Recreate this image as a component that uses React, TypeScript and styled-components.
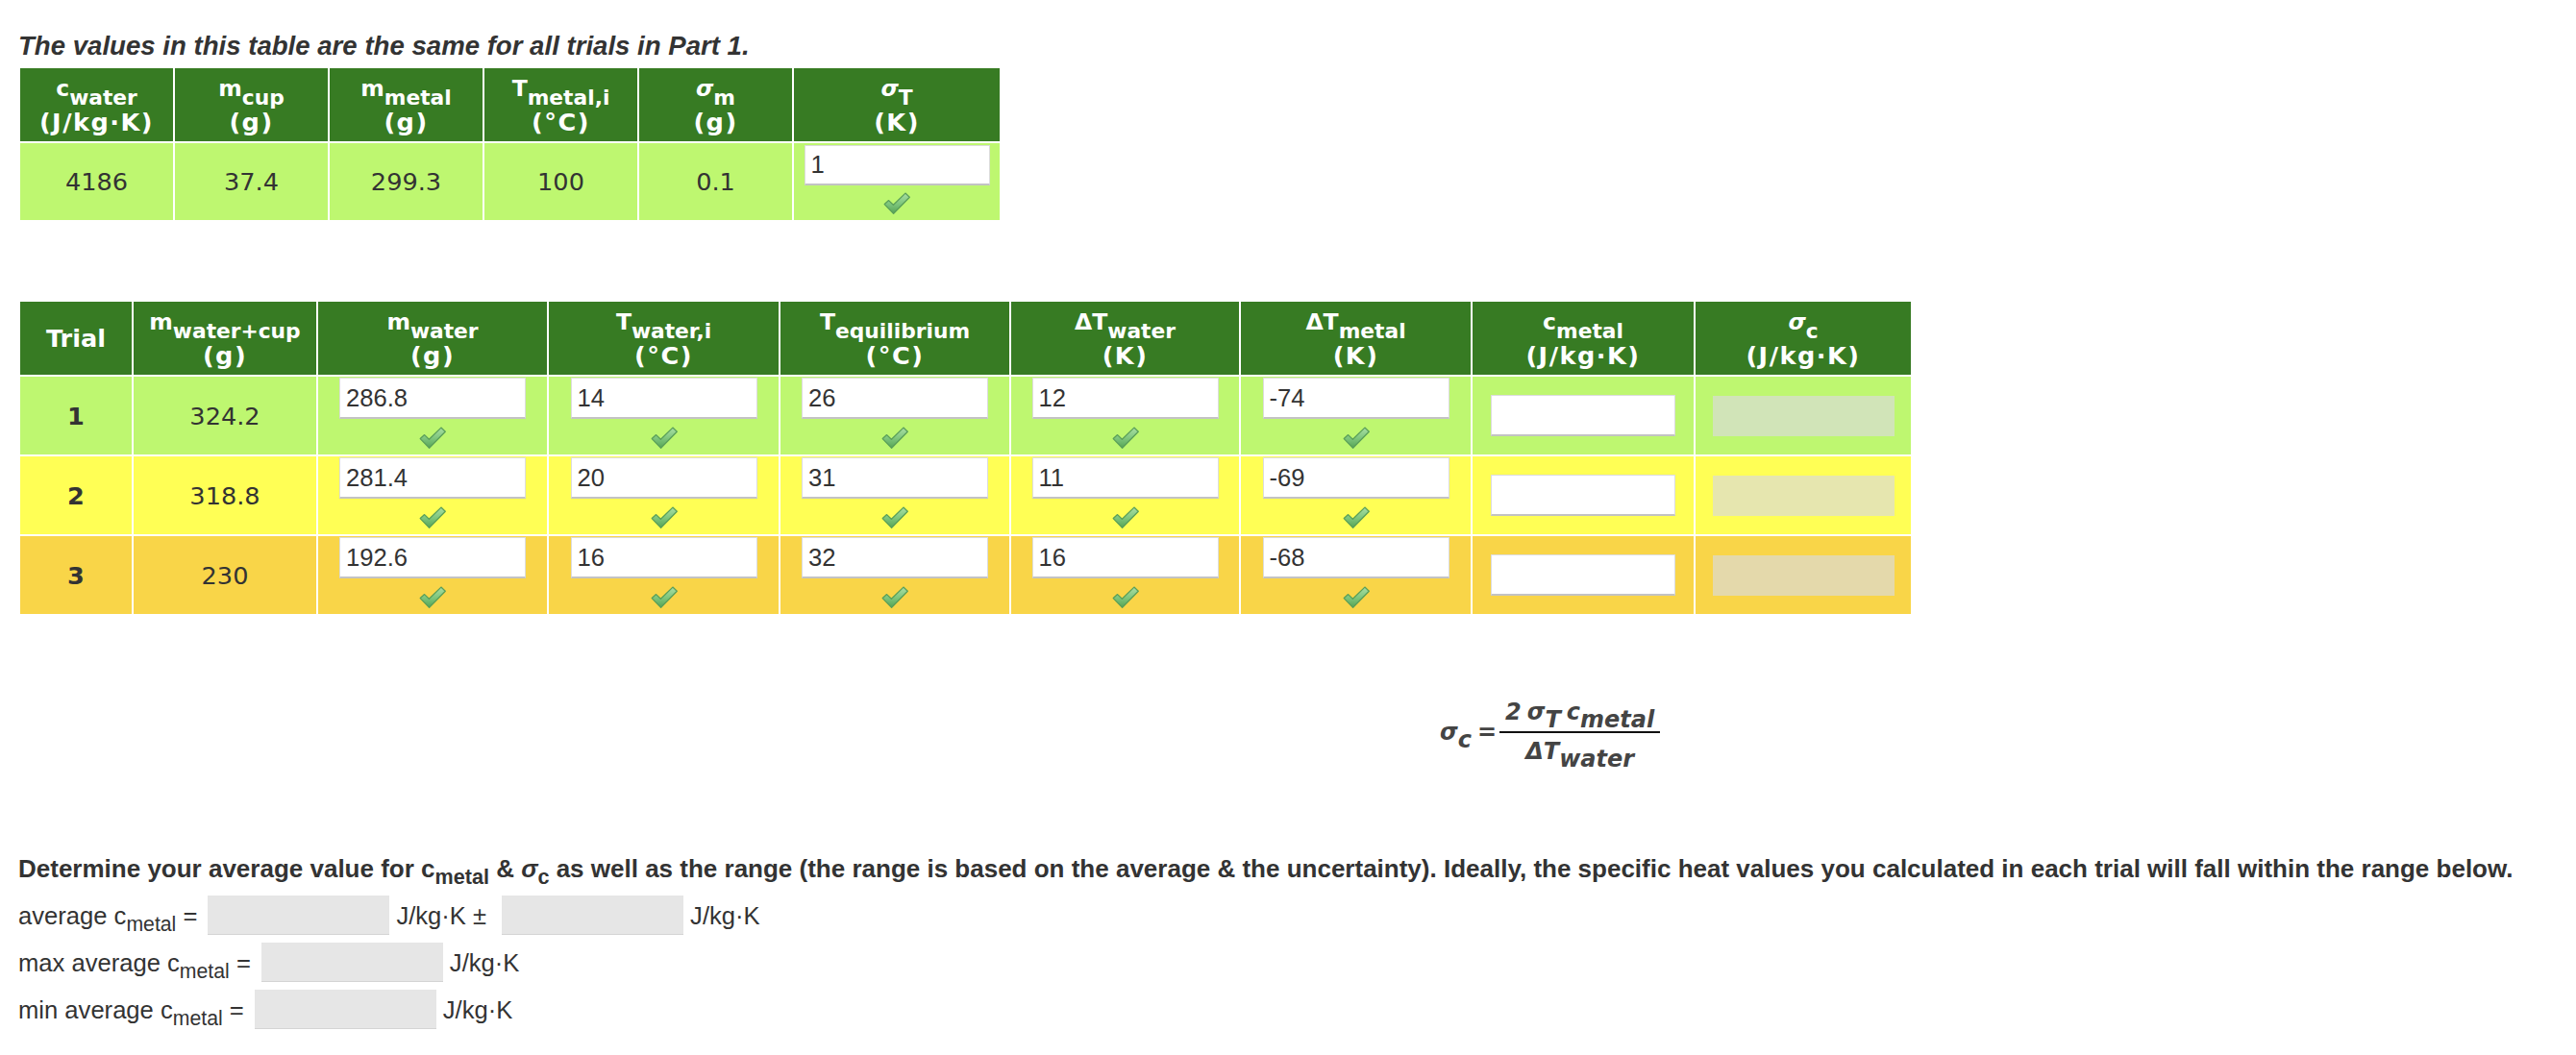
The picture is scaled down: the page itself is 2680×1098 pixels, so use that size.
import React, { useId } from "react";
import styled, { createGlobalStyle } from "styled-components";

type Tone = "green" | "yellow" | "gold";

const toneBg: Record<Tone, string> = {
  green: "#bef770",
  yellow: "#ffff55",
  gold: "#f9d548",
};

const GlobalStyle = createGlobalStyle`
  html, body { margin: 0; padding: 0; background: #ffffff; }
  body { font-family: "Liberation Sans", Arial, sans-serif; color: #333333; }
  * { box-sizing: border-box; }
`;

const Page = styled.main`
  padding: 32px 0 0 19px;
  min-height: 1098px;
`;

const Caption = styled.p`
  margin: 0;
  font: italic bold 27.6px/31px "Liberation Sans", Arial, sans-serif;
  color: #333333;
  white-space: nowrap;
`;

const DataTable = styled.table<{ $gap: number; $width: number }>`
  width: ${(p) => p.$width}px;
  margin-top: ${(p) => p.$gap}px;
  border-collapse: separate;
  border-spacing: 2px;
  table-layout: fixed;
  font-family: "DejaVu Sans", Verdana, sans-serif;
  font-size: 25.6px;
  color: #333333;
`;

const Col = styled.col<{ $w: number }>`
  width: ${(p) => p.$w}px;
`;

const HeadCell = styled.th`
  height: 76px;
  padding: 0;
  background: #377b23;
  color: #ffffff;
  font-weight: bold;
  line-height: 36px;
  text-align: center;
  vertical-align: middle;
  white-space: nowrap;
`;

const Sym = styled.span<{ $italic?: boolean; $size: number }>`
  font-size: ${(p) => p.$size}em;
  line-height: 1;
  font-style: ${(p) => (p.$italic ? "italic" : "normal")};
`;

const Sub = styled.sub<{ $size: number; $drop: number }>`
  font-size: ${(p) => p.$size}em;
  vertical-align: ${(p) => -p.$drop}px;
  line-height: 0;
`;

const UnitLine = styled.span`
  letter-spacing: 1.5px;
`;

const ValueCell = styled.td<{ $tone: Tone; $h: number; $bold?: boolean }>`
  height: ${(p) => p.$h}px;
  padding: 0;
  background: ${(p) => toneBg[p.$tone]};
  text-align: center;
  vertical-align: middle;
  font-weight: ${(p) => (p.$bold ? "bold" : "normal")};
`;

const EntryCell = styled.td<{ $tone: Tone; $h: number; $pad: number }>`
  height: ${(p) => p.$h}px;
  padding: ${(p) => p.$pad}px 0 0;
  background: ${(p) => toneBg[p.$tone]};
  vertical-align: top;
`;

const EntryStack = styled.div<{ $gap: number }>`
  display: flex;
  flex-direction: column;
  align-items: center;
  gap: ${(p) => p.$gap}px;
`;

const Field = styled.input<{ $w: number; $h: number }>`
  display: block;
  width: ${(p) => p.$w}px;
  height: ${(p) => p.$h}px;
  margin: 0;
  padding: 0 6px;
  background: #ffffff;
  border: 1px solid #dcdcdc;
  border-bottom: 2px solid #c3c3c3;
  border-radius: 0;
  font: 25.6px "Liberation Sans", Arial, sans-serif;
  color: #333333;
  outline: none;
`;

const CenterCell = styled.td<{ $tone: Tone; $h: number }>`
  height: ${(p) => p.$h}px;
  padding: 0;
  background: ${(p) => toneBg[p.$tone]};
  vertical-align: middle;
`;

const CenterBox = styled.div`
  display: flex;
  justify-content: center;
  align-items: center;
`;

const LockedField = styled.input`
  display: block;
  width: 189px;
  height: 42px;
  margin: 0;
  padding: 0 6px;
  border: none;
  border-radius: 0;
  background: rgba(218, 218, 218, 0.68);
  font: 25.6px "Liberation Sans", Arial, sans-serif;
  outline: none;
`;

const CheckMark: React.FC = () => {
  const id = useId();
  return (
    <svg width="30" height="25" viewBox="0 0 30 25" aria-hidden="true">
      <defs>
        <linearGradient id={id} x1="0" y1="0" x2="0" y2="1">
          <stop offset="0" stopColor="#a9dfa4" />
          <stop offset="0.55" stopColor="#7cc47a" />
          <stop offset="1" stopColor="#56a456" />
        </linearGradient>
      </defs>
      <path
        d="M2.2 13.6 L6.6 9.6 L11.4 14.2 L23.9 2.1 L28.3 6.2 L11.6 23.2 Z"
        fill={`url(#${id})`}
        stroke="#5a9f59"
        strokeWidth="1.3"
        strokeLinejoin="round"
      />
    </svg>
  );
};

const FormulaRow = styled.div`
  display: flex;
  align-items: center;
  height: 71px;
  margin: 85px 0 0 1479px;
  font: italic bold 24px/30px "DejaVu Sans", Verdana, sans-serif;
  color: #444444;
`;

const Lhs = styled.span`
  white-space: nowrap;
`;

const Equals = styled.span`
  margin: 0 3px 0 6px;
  font-style: normal;
`;

const Fraction = styled.span`
  display: inline-flex;
  flex-direction: column;
  align-items: center;
`;

const Numerator = styled.span`
  padding: 0 6px 5px;
  white-space: nowrap;
`;

const Gap = styled.span`
  display: inline-block;
  width: 6px;
`;

const Bar = styled.span`
  align-self: stretch;
  height: 2px;
  background: #111111;
`;

const Denominator = styled.span`
  padding-top: 4px;
  white-space: nowrap;
`;

const Prompt = styled.p`
  margin: 92px 0 0;
  font: bold 26px/30px "Liberation Sans", Arial, sans-serif;
  color: #333333;
  white-space: nowrap;
`;

const AnswerRow = styled.div<{ $first?: boolean }>`
  display: flex;
  align-items: center;
  height: 49px;
  margin-top: ${(p) => (p.$first ? 9 : 0)}px;
  font: 25.6px/30px "Liberation Sans", Arial, sans-serif;
  color: #333333;
  white-space: nowrap;
`;

const AnswerField = styled.input<{ $lead: number }>`
  display: block;
  width: 189px;
  height: 41px;
  margin: 0 0 0 ${(p) => p.$lead}px;
  padding: 0 6px;
  background: #e6e6e6;
  border: none;
  border-bottom: 1px solid #d4d4d4;
  border-radius: 0;
  font: 25.6px "Liberation Sans", Arial, sans-serif;
  outline: none;
`;

const UnitText = styled.span`
  margin-left: 7px;
`;

type Head = { sym: string; sub: string; unit: string; italic?: boolean };

const HeadLabel: React.FC<Head> = ({ sym, sub, unit, italic }) => (
  <>
    <Sym $italic={italic} $size={0.92}>
      {sym}
    </Sym>
    <Sub $size={0.85} $drop={9}>
      {sub}
    </Sub>
    <br />
    <UnitLine>{unit}</UnitLine>
  </>
);

const constantHeads: Head[] = [
  { sym: "c", sub: "water", unit: "(J/kg·K)" },
  { sym: "m", sub: "cup", unit: "(g)" },
  { sym: "m", sub: "metal", unit: "(g)" },
  { sym: "T", sub: "metal,i", unit: "(°C)" },
  { sym: "σ", sub: "m", unit: "(g)", italic: true },
  { sym: "σ", sub: "T", unit: "(K)", italic: true },
];

const constantValues = ["4186", "37.4", "299.3", "100", "0.1"];

const trialHeads: Head[] = [
  { sym: "m", sub: "water+cup", unit: "(g)" },
  { sym: "m", sub: "water", unit: "(g)" },
  { sym: "T", sub: "water,i", unit: "(°C)" },
  { sym: "T", sub: "equilibrium", unit: "(°C)" },
  { sym: "ΔT", sub: "water", unit: "(K)" },
  { sym: "ΔT", sub: "metal", unit: "(K)" },
  { sym: "c", sub: "metal", unit: "(J/kg·K)" },
  { sym: "σ", sub: "c", unit: "(J/kg·K)", italic: true },
];

type Trial = { n: number; total: string; entries: string[]; tone: Tone };

const trials: Trial[] = [
  { n: 1, total: "324.2", entries: ["286.8", "14", "26", "12", "-74"], tone: "green" },
  { n: 2, total: "318.8", entries: ["281.4", "20", "31", "11", "-69"], tone: "yellow" },
  { n: 3, total: "230", entries: ["192.6", "16", "32", "16", "-68"], tone: "gold" },
];

const constantCols = [159, 159, 159, 159, 159, 214];
const trialCols = [116, 190, 238, 239, 238, 237, 239, 230, 224];

const tableWidth = (cols: number[]) => cols.reduce((a, b) => a + b, 0) + (cols.length + 1) * 2;

const Metal: React.FC = () => (
  <>
    c
    <Sub $size={0.83} $drop={7}>
      metal
    </Sub>
  </>
);

export default function App() {
  return (
    <>
      <GlobalStyle />
      <Page>
        <Caption>The values in this table are the same for all trials in Part 1.</Caption>

        <DataTable $gap={6} $width={tableWidth(constantCols)}>
          <colgroup>
            {constantCols.map((w, i) => (
              <Col key={i} $w={w} />
            ))}
          </colgroup>
          <thead>
            <tr>
              {constantHeads.map((h, i) => (
                <HeadCell key={i}>
                  <HeadLabel {...h} />
                </HeadCell>
              ))}
            </tr>
          </thead>
          <tbody>
            <tr>
              {constantValues.map((v, i) => (
                <ValueCell key={i} $tone="green" $h={80}>
                  {v}
                </ValueCell>
              ))}
              <EntryCell $tone="green" $h={80} $pad={2}>
                <EntryStack $gap={6}>
                  <Field $w={193} $h={42} defaultValue="1" />
                  <CheckMark />
                </EntryStack>
              </EntryCell>
            </tr>
          </tbody>
        </DataTable>

        <DataTable $gap={81} $width={tableWidth(trialCols)}>
          <colgroup>
            {trialCols.map((w, i) => (
              <Col key={i} $w={w} />
            ))}
          </colgroup>
          <thead>
            <tr>
              <HeadCell>Trial</HeadCell>
              {trialHeads.map((h, i) => (
                <HeadCell key={i}>
                  <HeadLabel {...h} />
                </HeadCell>
              ))}
            </tr>
          </thead>
          <tbody>
            {trials.map((t) => (
              <tr key={t.n}>
                <ValueCell $tone={t.tone} $h={81} $bold>
                  {t.n}
                </ValueCell>
                <ValueCell $tone={t.tone} $h={81}>
                  {t.total}
                </ValueCell>
                {t.entries.map((e, i) => (
                  <EntryCell key={i} $tone={t.tone} $h={81} $pad={1}>
                    <EntryStack $gap={7}>
                      <Field $w={194} $h={43} defaultValue={e} />
                      <CheckMark />
                    </EntryStack>
                  </EntryCell>
                ))}
                <CenterCell $tone={t.tone} $h={81}>
                  <CenterBox>
                    <Field $w={192} $h={43} defaultValue="" />
                  </CenterBox>
                </CenterCell>
                <CenterCell $tone={t.tone} $h={81}>
                  <CenterBox>
                    <LockedField disabled defaultValue="" />
                  </CenterBox>
                </CenterCell>
              </tr>
            ))}
          </tbody>
        </DataTable>

        <FormulaRow>
          <Lhs>
            σ
            <Sub $size={1} $drop={8}>
              c
            </Sub>
            <Equals>=</Equals>
          </Lhs>
          <Fraction>
            <Numerator>
              2<Gap />σ
              <Sub $size={1} $drop={8}>
                T
              </Sub>
              <Gap />c
              <Sub $size={1} $drop={8}>
                metal
              </Sub>
            </Numerator>
            <Bar />
            <Denominator>
              ΔT
              <Sub $size={1} $drop={8}>
                water
              </Sub>
            </Denominator>
          </Fraction>
        </FormulaRow>

        <Prompt>
          Determine your average value for <Metal /> &amp; <i>σ</i>
          <Sub $size={0.83} $drop={7}>
            c
          </Sub>{" "}
          as well as the range (the range is based on the average &amp; the uncertainty). Ideally, the
          specific heat values you calculated in each trial will fall within the range below.
        </Prompt>

        <AnswerRow $first>
          <span>
            average <Metal /> =
          </span>
          <AnswerField $lead={11} disabled />
          <UnitText>J/kg·K ±</UnitText>
          <AnswerField $lead={16} disabled />
          <UnitText>J/kg·K</UnitText>
        </AnswerRow>
        <AnswerRow>
          <span>
            max average <Metal /> =
          </span>
          <AnswerField $lead={11} disabled />
          <UnitText>J/kg·K</UnitText>
        </AnswerRow>
        <AnswerRow>
          <span>
            min average <Metal /> =
          </span>
          <AnswerField $lead={11} disabled />
          <UnitText>J/kg·K</UnitText>
        </AnswerRow>
      </Page>
    </>
  );
}
